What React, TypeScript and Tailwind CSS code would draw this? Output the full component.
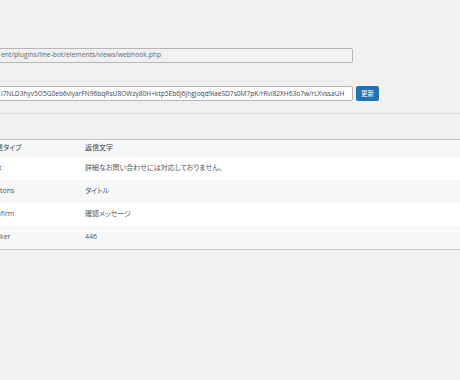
const FONT = 'font-["Segoe_UI","Open_Sans","Noto_Sans_CJK_JP",sans-serif] [font-feature-settings:"palt"]'

const ROWS = [
  { type: 'text', value: '詳細なお問い合わせには対応しておりません。' },
  { type: 'buttons', value: 'タイトル' },
  { type: 'confirm', value: '確認メッセージ' },
  { type: 'sticker', value: '446' },
]

export default function App() {
  return (
    <div className={`w-[460px] h-[380px] overflow-hidden bg-[#f0f0f1] pt-[48px] ${FONT}`}>
      {/* webhook path */}
      <div className="-ml-[4px] w-[357px] h-[15px] border border-[#b4b6b9] rounded-[2px] bg-[#f0f0f1] pl-[4px] flex items-center text-[6.8px] text-[#646970] whitespace-nowrap overflow-hidden">
        ent/plugins/line-bot/elements/views/webhook.php
      </div>

      {/* access token */}
      <div className="mt-[23px] flex items-center gap-[3px]">
        <div className="-ml-[4px] w-[357px] h-[15px] border border-[#b4b6b9] rounded-[2px] bg-white pl-[4px] flex items-center text-[6.6px] text-[#3c434a] whitespace-nowrap overflow-hidden">
          i7NLD3hyv5O5G0eb6vlyarFN96bqRsU8OWzy80H+ktp5Eb6J6jhgJoqd9laeSD7s0M7pK/rRvl82XH63o7w/rLXvssaUH
        </div>
        <button className="w-[23px] h-[15px] rounded-[2px] bg-[#2271b1] text-white text-[6.5px] flex items-center justify-center">
          更新
        </button>
      </div>

      <div className="mt-[12px] border-t border-[#dcdcde]" />

      {/* reply table */}
      <div className="mt-[25px] -ml-[11px] w-[480px] border-t border-b border-[#c3c4c7] text-[7px]">
        <div className="flex items-center h-[17px] bg-[#f6f7f7] text-[#3c434a]">
          <div className="w-[96px]">送信タイプ</div>
          <div>返信文字</div>
        </div>
        {ROWS.map((r, i) => (
          <div
            key={r.type}
            className={`flex items-center h-[23px] text-[#50575e] ${i % 2 === 0 ? 'bg-white' : 'bg-[#f6f7f7]'}`}
          >
            <div className="w-[96px]">{r.type}</div>
            <div>{r.value}</div>
          </div>
        ))}
      </div>
    </div>
  )
}
